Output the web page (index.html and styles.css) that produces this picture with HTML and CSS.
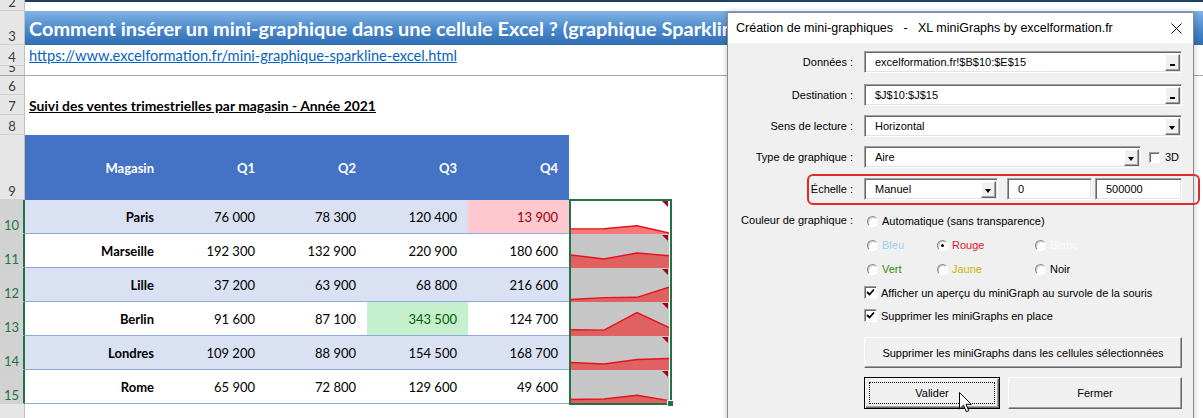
FILE: index.html
```html
<!DOCTYPE html>
<html lang="fr">
  <head>
    <meta charset="UTF-8" />
    <title>Mini-graphiques</title>
    <link rel="stylesheet" href="styles.css">
  </head>
  <body>
    <div class="sheet">
      <div class="row r2"><div class="rh">2</div><div class="topline"></div></div>
      <div class="row r3"><div class="rh">3</div><div class="title">Comment insérer un mini-graphique dans une cellule Excel ? (graphique Sparkline)</div></div>
      <div class="row r4"><div class="rh">4</div><div class="text-cell"><a class="link" href="#">https://www.excelformation.fr/mini-graphique-sparkline-excel.html</a></div></div>
      <div class="row r5"><div class="rh">5</div><div class="blank"></div></div>
      <div class="row r6"><div class="rh">6</div><div class="blank"></div></div>
      <div class="row r7"><div class="rh">7</div><div class="text-cell"><span class="subtitle">Suivi des ventes trimestrielles par magasin - Année 2021</span></div></div>
      <div class="row r8"><div class="rh">8</div><div class="blank"></div></div>
      <div class="row r9">
        <div class="rh">9</div>
        <div class="th name">Magasin</div>
        <div class="th">Q1</div>
        <div class="th">Q2</div>
        <div class="th">Q3</div>
        <div class="th">Q4</div>
        <div class="blank"></div>
      </div>
      <div class="row tr odd">
        <div class="rh sel">10</div>
        <div class="td name">Paris</div>
        <div class="td">76 000</div>
        <div class="td">78 300</div>
        <div class="td">120 400</div>
        <div class="td bad">13 900</div>
        <div class="spark white"><svg viewBox="0 0 98 34" width="98" height="34"><polygon class="area" points="0,34 0,28.83 33,28.68 66,25.81 98,33.05 98,34"/><polyline class="line" points="0,28.83 33,28.68 66,25.81 98,33.05"/></svg></div>
        <div class="blank"></div>
      </div>
      <div class="row tr">
        <div class="rh sel">11</div>
        <div class="td name">Marseille</div>
        <div class="td">192 300</div>
        <div class="td">132 900</div>
        <div class="td">220 900</div>
        <div class="td">180 600</div>
        <div class="spark"><svg viewBox="0 0 98 34" width="98" height="34"><polygon class="area" points="0,34 0,20.92 33,24.96 66,18.98 98,21.72 98,34"/><polyline class="line" points="0,20.92 33,24.96 66,18.98 98,21.72"/></svg></div>
        <div class="blank"></div>
      </div>
      <div class="row tr odd">
        <div class="rh sel">12</div>
        <div class="td name">Lille</div>
        <div class="td">37 200</div>
        <div class="td">63 900</div>
        <div class="td">68 800</div>
        <div class="td">216 600</div>
        <div class="spark"><svg viewBox="0 0 98 34" width="98" height="34"><polygon class="area" points="0,34 0,31.47 33,29.65 66,29.32 98,19.27 98,34"/><polyline class="line" points="0,31.47 33,29.65 66,29.32 98,19.27"/></svg></div>
        <div class="blank"></div>
      </div>
      <div class="row tr">
        <div class="rh sel">13</div>
        <div class="td name">Berlin</div>
        <div class="td">91 600</div>
        <div class="td">87 100</div>
        <div class="td good">343 500</div>
        <div class="td">124 700</div>
        <div class="spark"><svg viewBox="0 0 98 34" width="98" height="34"><polygon class="area" points="0,34 0,27.77 33,28.08 66,10.64 98,25.52 98,34"/><polyline class="line" points="0,27.77 33,28.08 66,10.64 98,25.52"/></svg></div>
        <div class="blank"></div>
      </div>
      <div class="row tr odd">
        <div class="rh sel">14</div>
        <div class="td name">Londres</div>
        <div class="td">109 200</div>
        <div class="td">88 900</div>
        <div class="td">154 500</div>
        <div class="td">168 700</div>
        <div class="spark"><svg viewBox="0 0 98 34" width="98" height="34"><polygon class="area" points="0,34 0,26.57 33,27.95 66,23.49 98,22.53 98,34"/><polyline class="line" points="0,26.57 33,27.95 66,23.49 98,22.53"/></svg></div>
        <div class="blank"></div>
      </div>
      <div class="row tr">
        <div class="rh sel">15</div>
        <div class="td name">Rome</div>
        <div class="td">65 900</div>
        <div class="td">72 800</div>
        <div class="td">129 600</div>
        <div class="td">49 600</div>
        <div class="spark"><svg viewBox="0 0 98 34" width="98" height="34"><polygon class="area" points="0,34 0,29.52 33,29.05 66,25.19 98,30.63 98,34"/><polyline class="line" points="0,29.52 33,29.05 66,25.19 98,30.63"/></svg></div>
        <div class="blank"></div>
      </div>
      <div class="row r16"><div class="rh"></div><div class="blank"></div></div>
    </div>

    <div class="selection"></div>

    <div class="dialog">
      <div class="titlebar">
        <span class="dlg-title">Création de mini-graphiques   -   XL miniGraphs by excelformation.fr</span>
        <svg class="close" width="11" height="11" viewBox="0 0 11 11"><path d="M0.5 0.5 L10.5 10.5 M10.5 0.5 L0.5 10.5" stroke="#000" stroke-width="1" fill="none"/></svg>
      </div>
      <div class="dlg-body">
        <div class="field f-data">
          <span class="lbl">Données :</span>
          <div class="textbox">excelformation.fr!$B$10:$E$15<span class="sidebtn refbtn"></span></div>
        </div>
        <div class="field f-dest">
          <span class="lbl">Destination :</span>
          <div class="textbox">$J$10:$J$15<span class="sidebtn refbtn"></span></div>
        </div>
        <div class="field f-sens">
          <span class="lbl">Sens de lecture :</span>
          <div class="textbox">Horizontal<span class="sidebtn dropbtn"></span></div>
        </div>
        <div class="field f-type">
          <span class="lbl">Type de graphique :</span>
          <div class="ctrl-line">
            <div class="textbox combo-type">Aire<span class="sidebtn dropbtn"></span></div>
            <span class="check small"></span>
            <span class="label-3d">3D</span>
          </div>
        </div>
        <div class="field f-scale">
          <span class="lbl">Échelle :</span>
          <div class="ctrl-line">
            <div class="textbox combo-scale">Manuel<span class="sidebtn dropbtn"></span></div>
            <div class="textbox num-min">0</div>
            <div class="textbox num-max">500000</div>
          </div>
          <span class="highlight"></span>
        </div>
        <div class="field f-colors">
          <span class="lbl">Couleur de graphique :</span>
          <div class="radios">
            <div class="opt wide"><span class="radio"></span>Automatique (sans transparence)</div>
            <div class="opt c-blue"><span class="radio"></span>Bleu</div>
            <div class="opt c-red"><span class="radio on"></span>Rouge</div>
            <div class="opt c-white"><span class="radio"></span>Blanc</div>
            <div class="opt c-green"><span class="radio"></span>Vert</div>
            <div class="opt c-yellow"><span class="radio"></span>Jaune</div>
            <div class="opt"><span class="radio"></span>Noir</div>
          </div>
        </div>
        <div class="indent">
          <div class="opt check-row"><span class="check"><svg width="9" height="9" viewBox="0 0 9 9"><path d="M1 4 L3.5 6.5 L8 1.5" stroke="#000" stroke-width="1.8" fill="none"/></svg></span>Afficher un aperçu du miniGraph au survole de la souris</div>
          <div class="opt check-row"><span class="check"><svg width="9" height="9" viewBox="0 0 9 9"><path d="M1 4 L3.5 6.5 L8 1.5" stroke="#000" stroke-width="1.8" fill="none"/></svg></span>Supprimer les miniGraphs en place</div>
          <div class="btn btn-wide">Supprimer les miniGraphs dans les cellules sélectionnées</div>
          <div class="btn-line">
            <div class="btn btn-ok"><span class="focus">Valider</span></div>
            <div class="btn btn-close">Fermer</div>
          </div>
        </div>
      </div>
    </div>

    <svg class="cursor" width="14" height="22" viewBox="0 0 14 22"><path d="M0.5 0.5 L0.5 17 L4.5 13.2 L7.3 19.8 L9.8 18.7 L7 12.3 L12.3 12.3 Z" fill="#fff" stroke="#000" stroke-width="1"/></svg>
  </body>
</html>
```

FILE: styles.css
```css
body {
  margin: 0;
  width: 1203px;
  height: 418px;
  overflow: hidden;
  position: relative;
  background: #fff;
  font-family: Lato, "Liberation Sans", sans-serif;
  color: #000;
}

/* sheet */
.sheet {
  display: flex;
  flex-direction: column;
}
.row {
  display: flex;
  flex: none;
}
.r2 { height: 11px; }
.r3 { height: 34px; }
.r4 { height: 21px; }
.r5 { height: 10px; }
.r6 { height: 19px; }
.r7, .r8 { height: 20px; }
.r9 { height: 65px; }
.tr { height: 34px; }
.r16 { height: 20px; }

.rh {
  width: 25px;
  flex: none;
  box-sizing: border-box;
  background: #e6e6e6;
  border-right: 1px solid #bfbfbf;
  border-bottom: 1px solid #d0d0d0;
  color: #3a3a3a;
  font-size: 13px;
  line-height: 14px;
  display: flex;
  align-items: flex-end;
  justify-content: center;
  padding-bottom: 1px;
  overflow: hidden;
}
.rh.sel {
  background: #d2d2d2;
  color: #217346;
  border-right: 2px solid #217346;
}
.r5 .rh,
.r5 .blank {
  border-bottom: 1px solid #a6a6a6;
  box-sizing: border-box;
}
.blank {
  flex: 1;
}
.topline {
  flex: 1;
  border-top: 2px solid #1f3d66;
}
.title {
  flex: 1;
  background: linear-gradient(#80b3e4, #4a88cb 55%, #2f6db3);
  color: #fff;
  font-weight: 700;
  font-size: 19.9px;
  padding-left: 4px;
  display: flex;
  align-items: center;
  white-space: nowrap;
  overflow: hidden;
}
.text-cell {
  flex: 1;
  padding-left: 4px;
  display: flex;
  align-items: flex-end;
  white-space: nowrap;
}
.r4 .text-cell {
  padding-bottom: 2px;
}
.r7 .text-cell {
  align-items: center;
}
.link {
  color: #0563c1;
  text-decoration: underline;
  font-size: 14.6px;
}
.subtitle {
  font-weight: 700;
  font-size: 13.9px;
  text-decoration: underline;
}

/* table */
.th,
.td {
  width: 101px;
  flex: none;
  box-sizing: border-box;
  display: flex;
  align-items: center;
  justify-content: flex-end;
  padding-right: 11px;
  font-size: 13px;
}
.th {
  background: #4472c4;
  color: #fff;
  font-weight: 700;
}
.th.name,
.td.name {
  width: 140px;
}
.td {
  border-bottom: 1px solid #8ea9db;
}
.odd .td {
  background: #d9e1f2;
}
.td.name {
  font-weight: 700;
}
.odd .td.bad,
.td.bad {
  background: #ffc7ce;
  color: #9c0006;
}
.td.good {
  background: #c6efce;
  color: #006100;
}

/* sparklines */
.spark {
  width: 101px;
  flex: none;
  box-sizing: border-box;
  padding-left: 2px;
  position: relative;
}
.spark svg {
  display: block;
  background: #c6c6c6;
}
.spark.white svg {
  background: #fff;
}
.spark::after {
  content: "";
  position: absolute;
  top: 1px;
  right: 2px;
  border-left: 6px solid transparent;
  border-top: 6px solid #a3001e;
}
.area {
  fill: rgba(240, 30, 30, 0.6);
}
.line {
  fill: none;
  stroke: #e3141e;
  stroke-width: 1.4;
}
.selection {
  position: absolute;
  left: 569px;
  top: 199px;
  width: 103px;
  height: 206px;
  box-sizing: border-box;
  border: 2px solid #217346;
}
.selection::after {
  content: "";
  position: absolute;
  right: -4px;
  bottom: -4px;
  width: 5px;
  height: 5px;
  background: #217346;
  border: 1px solid #fff;
}

/* dialog */
.dialog {
  position: absolute;
  left: 727px;
  top: 12px;
  width: 467px;
  height: 420px;
  box-sizing: border-box;
  background: #f0f0f0;
  border: 1px solid #8c8c8c;
  box-shadow: 0 0 6px rgba(0, 0, 0, 0.25);
  font-family: "Liberation Sans", Arial, sans-serif;
  font-size: 11px;
  color: #000;
}
.titlebar {
  height: 30px;
  background: #fff;
  display: flex;
  align-items: center;
  justify-content: space-between;
  padding: 0 11px 0 8px;
}
.dlg-title {
  font-size: 12.5px;
  white-space: pre;
}
.dlg-body {
  padding-top: 8px;
}
.field {
  display: grid;
  grid-template-columns: 125px 318px;
  column-gap: 11px;
  align-items: center;
  height: 22px;
  position: relative;
}
.lbl {
  text-align: right;
  white-space: nowrap;
}
.f-data { margin-bottom: 11px; }
.f-dest { margin-bottom: 9px; }
.f-sens { margin-bottom: 9px; }
.f-type { margin-bottom: 10px; }
.f-scale { margin-bottom: 9px; }

.textbox {
  position: relative;
  height: 22px;
  box-sizing: border-box;
  background: #fff;
  border: 1px solid;
  border-color: #a0a0a0 #fff #fff #a0a0a0;
  box-shadow: inset 1px 1px 0 #696969, inset -1px -1px 0 #e3e3e3;
  padding: 0 20px 0 10px;
  display: flex;
  align-items: center;
  white-space: nowrap;
}
.sidebtn {
  position: absolute;
  right: 1px;
  top: 2px;
  bottom: 1px;
  width: 15px;
  box-sizing: border-box;
  background: #f0f0f0;
  border: 1px solid;
  border-color: #fff #696969 #696969 #fff;
  box-shadow: inset -1px -1px 0 #a0a0a0;
}
.refbtn::after {
  content: "";
  position: absolute;
  left: 4px;
  bottom: 4px;
  width: 5px;
  height: 2px;
  background: #000;
}
.dropbtn::after {
  content: "";
  position: absolute;
  left: 3px;
  top: 7px;
  border-left: 3.5px solid transparent;
  border-right: 3.5px solid transparent;
  border-top: 4px solid #000;
}
.ctrl-line {
  display: flex;
  align-items: center;
}
.combo-type {
  width: 277px;
  flex: none;
}
.label-3d {
  margin-left: 5px;
}
.combo-scale {
  width: 134px;
  flex: none;
}
.num-min {
  width: 85px;
  flex: none;
  margin-left: 9px;
}
.num-max {
  width: 87px;
  flex: none;
  margin-left: 3px;
}
.highlight {
  position: absolute;
  left: 79px;
  right: -7px;
  top: -4px;
  bottom: -5px;
  border: 2px solid #dc2a2e;
  border-radius: 6px;
}

.f-colors {
  height: auto;
  align-items: start;
}
.f-colors .lbl {
  padding-top: 5px;
}
.radios {
  display: grid;
  grid-template-columns: 70px 98px 1fr;
  grid-auto-rows: 24px;
  padding-left: 3px;
}
.opt {
  display: flex;
  align-items: center;
  gap: 4px;
  white-space: nowrap;
}
.opt.wide {
  grid-column: 1 / 4;
}
.radio {
  width: 11px;
  height: 11px;
  box-sizing: border-box;
  border-radius: 50%;
  background: #fff;
  border: 1px solid;
  border-color: #8a8a8a #fff #fff #8a8a8a;
  box-shadow: inset 1px 1px 0 #c8c8c8;
  position: relative;
  flex: none;
}
.radio.on::after {
  content: "";
  position: absolute;
  left: 3px;
  top: 3px;
  width: 3px;
  height: 3px;
  border-radius: 50%;
  background: #000;
}
.c-blue { color: #9ccfee; }
.c-red { color: #e0142c; }
.c-white { color: #fbfbfb; }
.c-green { color: #2f8a12; }
.c-yellow { color: #c9b800; }

.indent {
  margin-left: 136px;
  width: 318px;
}
.check-row {
  height: 23px;
}
.check {
  width: 13px;
  height: 13px;
  box-sizing: border-box;
  background: #fff;
  border: 1px solid;
  border-color: #a0a0a0 #fff #fff #a0a0a0;
  box-shadow: inset 1px 1px 0 #696969;
  display: flex;
  align-items: center;
  justify-content: center;
  flex: none;
}
.check.small {
  width: 11px;
  height: 11px;
  margin-left: 8px;
}
.btn {
  box-sizing: border-box;
  background: #f0f0f0;
  border: 1px solid;
  border-color: #fff #696969 #696969 #fff;
  box-shadow: inset -1px -1px 0 #a0a0a0;
  display: flex;
  align-items: center;
  justify-content: center;
  white-space: nowrap;
}
.btn-wide {
  height: 31px;
  margin-top: 10px;
}
.btn-line {
  display: flex;
  gap: 8px;
  margin-top: 9px;
}
.btn-ok {
  width: 136px;
  height: 32px;
  border: 1px solid #000;
  box-shadow: inset 1px 1px 0 #fff, inset -1px -1px 0 #696969, inset -2px -2px 0 #a0a0a0;
  padding: 4px;
}
.focus {
  flex: 1;
  align-self: stretch;
  border: 1px dotted #000;
  display: flex;
  align-items: center;
  justify-content: center;
}
.btn-close {
  flex: 1;
  height: 32px;
}

.cursor {
  position: absolute;
  left: 959px;
  top: 392px;
}
```
